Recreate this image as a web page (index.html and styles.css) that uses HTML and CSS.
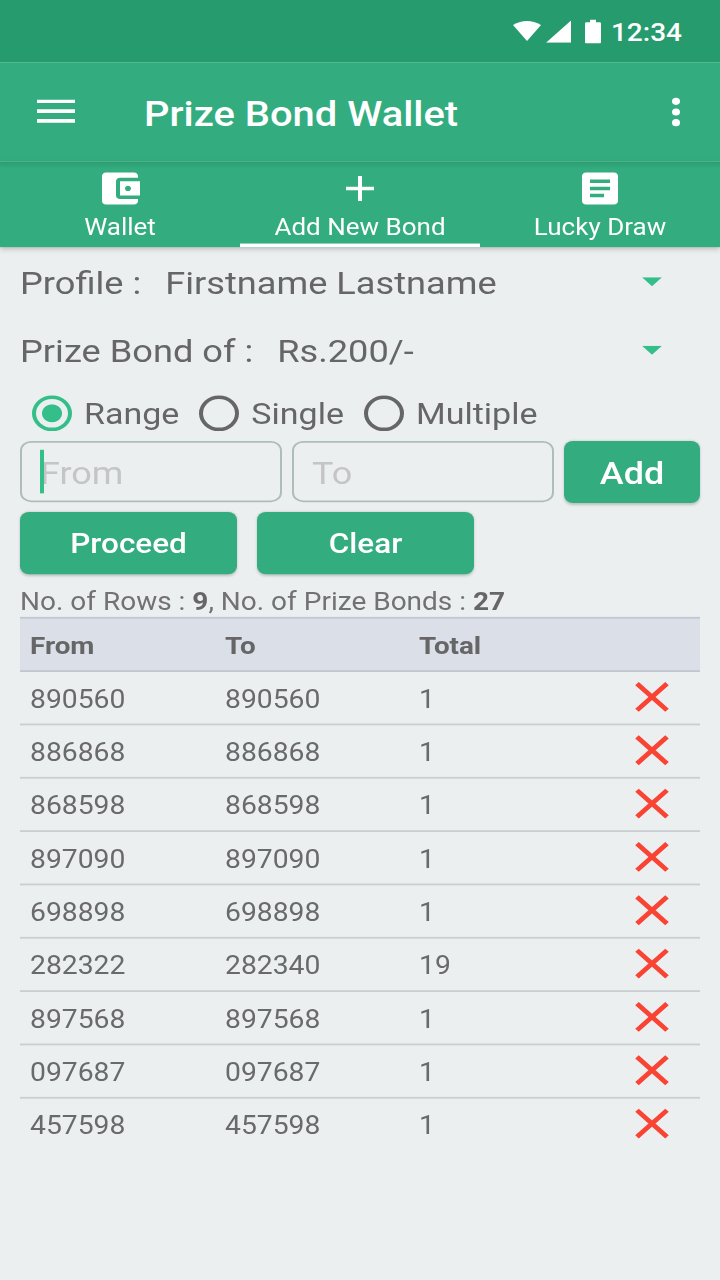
FILE: index.html
```
<!DOCTYPE html>
<html lang="en">
<head>
<meta charset="utf-8">
<title>Prize Bond Wallet</title>
<link rel="stylesheet" href="styles.css">
</head>
<body>

<div class="screen">
	<div class="status">
		<svg class="status__wifi" width="28" height="24" viewBox="0 0 28 24"><path d="M0 5Q14-4 28 5L14 23Z" fill="#fff"/></svg>
		<svg class="status__signal" width="25" height="25" viewBox="0 0 25 25"><path d="M0 25H25V0Z" fill="#fff"/></svg>
		<svg class="status__battery" width="16" height="27" viewBox="0 0 16 27"><path d="M5 0H11V3H14.5Q16 3 16 4.5V25.5Q16 27 14.5 27H1.5Q0 27 0 25.5V4.5Q0 3 1.5 3H5Z" fill="#fff"/></svg>
		<span class="status__time">12:34</span>
	</div>

	<div class="toolbar">
		<svg width="38" height="28" viewBox="0 0 38 28"><path d="M0 2H38M0 13H38M0 24H38" stroke="#fff" stroke-width="4"/></svg>
		<h1>Prize Bond Wallet</h1>
		<svg width="8" height="34" viewBox="0 0 8 34" fill="#fff"><circle cx="4" cy="5" r="4"/><circle cx="4" cy="17" r="4"/><circle cx="4" cy="29" r="4"/></svg>
	</div>

	<div class="tabs">
		<div class="tab">
			<svg width="48" height="48" viewBox="0 0 24 24" fill="#fff"><path d="M21 18v1c0 1.100-.9 2-2 2H5c-1.110 0-2-.9-2-2V5c0-1.100.89-2 2-2h14c1.100 0 2 .9 2 2v1h-9c-1.110 0-2 .9-2 2v8c0 1.100.89 2 2 2h9zm-9-2h10V8H12v8zm4-2.500c-.83 0-1.500-.67-1.500-1.500s.67-1.500 1.500-1.500 1.500.67 1.500 1.500-.67 1.500-1.500 1.500z"/></svg>
			<span>Wallet</span>
		</div>
		<div class="tab tab--active">
			<svg width="48" height="48" viewBox="0 0 24 24" fill="#fff"><path d="M19 13h-6v6h-2v-6H5v-2h6V5h2v6h6v2z"/></svg>
			<span>Add New Bond</span>
		</div>
		<div class="tab">
			<svg width="48" height="48" viewBox="0 0 24 24" fill="#fff"><path d="M19 3H5c-1.100 0-2 .9-2 2v14c0 1.100.9 2 2 2h14c1.100 0 2-.9 2-2V5c0-1.100-.9-2-2-2zm-5 14H7v-2h7v2zm3-4H7v-2h10v2zm0-4H7V7h10v2z"/></svg>
			<span>Lucky Draw</span>
		</div>
	</div>

	<div class="content">
		<div class="select select--profile">
			<span class="select__label">Profile :</span>
			<span class="select__value">Firstname Lastname</span>
			<svg width="20" height="10" viewBox="0 0 20 10"><path d="M0 0H20L10 10Z" fill="#34be89"/></svg>
		</div>
		<div class="select">
			<span class="select__label">Prize Bond of :</span>
			<span class="select__value">Rs.200/-</span>
			<svg width="20" height="10" viewBox="0 0 20 10"><path d="M0 0H20L10 10Z" fill="#34be89"/></svg>
		</div>

		<div class="radios">
			<div class="radio radio--on"><i></i><span>Range</span></div>
			<div class="radio"><i></i><span>Single</span></div>
			<div class="radio"><i></i><span>Multiple</span></div>
		</div>

		<div class="inputs">
			<div class="input input--focus">From</div>
			<div class="input">To</div>
			<button class="boton boton--add">Add</button>
		</div>
		<div class="botones">
			<button class="boton">Proceed</button>
			<button class="boton">Clear</button>
		</div>

		<p class="count">No. of Rows : <b>9</b>, No. of Prize Bonds : <b>27</b></p>

		<div class="table" id="table">
			<div class="row row--head"><span>From</span><span>To</span><span>Total</span></div>
		</div>
	</div>
</div>

<script>
const bonds = [
	['890560', '890560', 1],
	['886868', '886868', 1],
	['868598', '868598', 1],
	['897090', '897090', 1],
	['698898', '698898', 1],
	['282322', '282340', 19],
	['897568', '897568', 1],
	['097687', '097687', 1],
	['457598', '457598', 1]
]
const cross = '<svg width="34" height="36" viewBox="0 0 34 36"><path d="M2 2L32 32M32 2L2 32" stroke="#f94333" stroke-width="5"/></svg>'

bonds.forEach(bond => {
	const row = document.createElement('div')
	row.className = 'row'
	row.innerHTML = bond.map(value => '<span>' + value + '</span>').join('') + cross
	document.getElementById('table').appendChild(row)
})
</script>
</body>
</html>
```
FILE: styles.css
```
* {
	box-sizing: border-box;
}

body {
	margin: 0;
	background-color: #ebeff0;
	font-family: Roboto, sans-serif;
	color: #666;
}

/* 18:9 layout squeezed into the 16:9 window */
.screen {
	width: 720px;
	height: 1300px;
	margin-bottom: -20px;
	transform: scaleY(0.88889);
	transform-origin: 0 0;
}

svg {
	display: block;
	flex: none;
}

.status {
	display: flex;
	align-items: center;
	justify-content: flex-end;
	height: 70px;
	padding-right: 38px;
	background-color: #259b6e;
	color: #fff;
}

.status__signal {
	margin-left: 5px;
}

.status__battery {
	margin: 0 10px 0 14px;
}

.status__time {
	font-size: 28px;
	font-weight: 500;
	line-height: 32px;
	padding-top: 3px;
}

.toolbar {
	display: flex;
	align-items: center;
	height: 112px;
	padding: 0 40px 0 37px;
	background-color: #33ad7f;
}

.toolbar h1 {
	flex: 1;
	margin: 5px 0 0 69px;
	color: #fff;
	font-size: 39.9px;
	font-weight: 500;
}

.tabs {
	display: flex;
	height: 96px;
	background: linear-gradient(#2d9c72, #33ad7f 8px);
	box-shadow: 0 2px 6px rgba(0, 0, 0, 0.25);
}

.tab {
	flex: 1;
	display: flex;
	flex-direction: column;
	align-items: center;
	padding-top: 6px;
	color: #fff;
	font-size: 26px;
	line-height: 30px;
}

.tab svg {
	margin-bottom: 4px;
}

.tab--active {
	border-bottom: 4px solid #fff;
}

.content {
	padding: 0 20px;
}

.select {
	display: flex;
	align-items: center;
	height: 73px;
	margin-bottom: 3px;
	padding-right: 38px;
	font-size: 36.2px;
}

.select svg {
	margin-bottom: 2px;
}

.select--profile {
	height: 80px;
	margin-bottom: 0;
}

.select__value {
	flex: 1;
	margin-left: 24px;
}

.radios {
	display: flex;
	align-items: center;
	height: 62px;
	padding-left: 12px;
	font-size: 34px;
}

.radio {
	display: flex;
	align-items: center;
	gap: 12px;
	margin-right: 20px;
}

.radio i {
	width: 40px;
	height: 40px;
	margin-bottom: 1px;
	border: 4px solid #666;
	border-radius: 50%;
}

.radio--on i {
	border-color: #34be89;
	background: radial-gradient(#34be89 9.500px, transparent 10.500px);
}

.inputs {
	display: flex;
	gap: 10px;
	height: 70px;
}

.input {
	position: relative;
	width: 262px;
	height: 69px;
	padding-left: 18px;
	border: 2px solid #aebcbd;
	border-radius: 11px;
	color: #c5c5c5;
	font-size: 36px;
	line-height: 68px;
}

.input--focus::before {
	content: "";
	position: absolute;
	left: 18px;
	top: 8px;
	width: 4px;
	height: 49px;
	background-color: #34be89;
}

.boton {
	width: 217px;
	height: 70px;
	padding: 1px 0 0;
	border: none;
	border-radius: 9px;
	background-color: #33ad7f;
	box-shadow: 0 1px 3px rgba(0, 0, 0, 0.2);
	color: #fff;
	font-family: inherit;
	font-size: 31.5px;
	font-weight: 500;
}

.boton--add {
	width: 136px;
	padding-top: 2px;
	font-size: 36px;
}

.botones {
	display: flex;
	gap: 20px;
	margin-top: 10px;
}

.count {
	margin: 0;
	height: 48px;
	font-size: 28px;
	line-height: 62px;
	color: #727272;
}

.count b {
	color: #666;
}

.row {
	display: grid;
	grid-template-columns: 195px 194px 216px 34px;
	align-items: center;
	height: 60px;
	padding-left: 10px;
	border-bottom: 2px solid #cbced0;
	font-size: 28.3px;
	color: #6a6a6a;
}

.row span {
	padding-top: 2px;
}

.row:last-child {
	border-bottom-color: transparent;
}

.row--head {
	height: 62px;
	border-top: 2px solid #c1c6d1;
	border-bottom-color: #c1c6d1;
	background-color: #dbdfe8;
	font-size: 27.8px;
	font-weight: 700;
	color: #666;
}
```
